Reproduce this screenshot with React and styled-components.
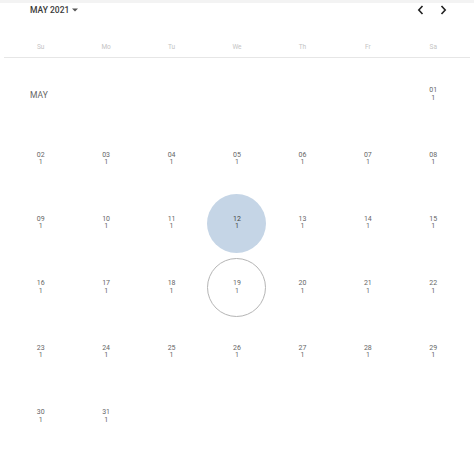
import React from "react";
import styled, { createGlobalStyle } from "styled-components";

const GlobalStyle = createGlobalStyle`
  html, body { margin: 0; padding: 0; background: #fff; }
  body { font-family: Roboto, "Liberation Sans", sans-serif; }
`;

const WEEKDAYS = ["Su", "Mo", "Tu", "We", "Th", "Fr", "Sa"];

const Page = styled.div`
  width: 474px;
  height: 452px;
  box-sizing: border-box;
  border-top: 3px solid #f3f3f3;
  overflow: hidden;
`;

const Toolbar = styled.div`
  display: flex;
  align-items: center;
  justify-content: space-between;
  height: 14px;
  padding: 0 27px 0 30px;
`;

const Title = styled.button`
  display: flex;
  align-items: center;
  gap: 3px;
  border: 0;
  background: none;
  padding: 0;
  font-family: inherit;
  font-size: 8.5px;
  font-weight: 500;
  color: #3a3a3a;
`;

const Arrows = styled.div`
  display: flex;
  gap: 16px;
`;

const ArrowButton = styled.button`
  border: 0;
  background: none;
  padding: 0;
  width: 7px;
  height: 10px;
  display: flex;
  align-items: center;
  justify-content: center;
  svg { display: block; }
`;

const WeekHeader = styled.div`
  display: grid;
  grid-template-columns: repeat(7, 1fr);
  margin: 0 4px;
  padding: 26px 4px 0;
  height: 14px;
  border-bottom: 1px solid #e6e6e6;
`;

const WeekDay = styled.div`
  text-align: center;
  font-size: 6.5px;
  color: #c4c4c4;
  line-height: 8px;
`;

const Grid = styled.div`
  display: grid;
  grid-template-columns: repeat(7, 1fr);
  grid-auto-rows: 64.4px;
  padding: 4.5px 8px 0;
`;

const Cell = styled.div`
  display: flex;
  align-items: center;
  justify-content: center;
`;

const MonthLabel = styled.div`
  font-size: 8.5px;
  color: #666;
  padding-left: 22px;
  display: flex;
  align-items: center;
`;

const Day = styled.div`
  width: 59px;
  height: 59px;
  box-sizing: border-box;
  border-radius: 50%;
  display: flex;
  flex-direction: column;
  align-items: center;
  justify-content: center;
  font-size: 7px;
  line-height: 7.5px;
  color: ${(p) => (p.$selected ? "#444" : "#666")};
  background: ${(p) => (p.$selected ? "#c5d5e6" : "transparent")};
  border: 1px solid ${(p) => (p.$today ? "#b5b5b5" : "transparent")};
`;

const ChevronLeft = () => (
  <svg width="7" height="10" viewBox="0 0 7 10">
    <path d="M5.5 1 L1.8 5 L5.5 9" fill="none" stroke="#222" strokeWidth="1.6" />
  </svg>
);

const ChevronRight = () => (
  <svg width="7" height="10" viewBox="0 0 7 10">
    <path d="M1.5 1 L5.2 5 L1.5 9" fill="none" stroke="#222" strokeWidth="1.6" />
  </svg>
);

const Caret = () => (
  <svg width="6" height="4" viewBox="0 0 6 4">
    <path d="M0 0.5 L6 0.5 L3 3.5 Z" fill="#555" />
  </svg>
);

const App = () => {
  const cells = [];
  cells.push(<MonthLabel key="month" style={{ gridColumn: "1 / span 6" }}>MAY</MonthLabel>);
  for (let d = 1; d <= 31; d++) {
    cells.push(
      <Cell key={d}>
        <Day $selected={d === 12} $today={d === 19}>
          <span>{String(d).padStart(2, "0")}</span>
          <span>1</span>
        </Day>
      </Cell>
    );
  }
  return (
    <Page>
      <GlobalStyle />
      <Toolbar>
        <Title>
          MAY 2021 <Caret />
        </Title>
        <Arrows>
          <ArrowButton><ChevronLeft /></ArrowButton>
          <ArrowButton><ChevronRight /></ArrowButton>
        </Arrows>
      </Toolbar>
      <WeekHeader>
        {WEEKDAYS.map((w) => (
          <WeekDay key={w}>{w}</WeekDay>
        ))}
      </WeekHeader>
      <Grid>{cells}</Grid>
    </Page>
  );
};

export default App;
